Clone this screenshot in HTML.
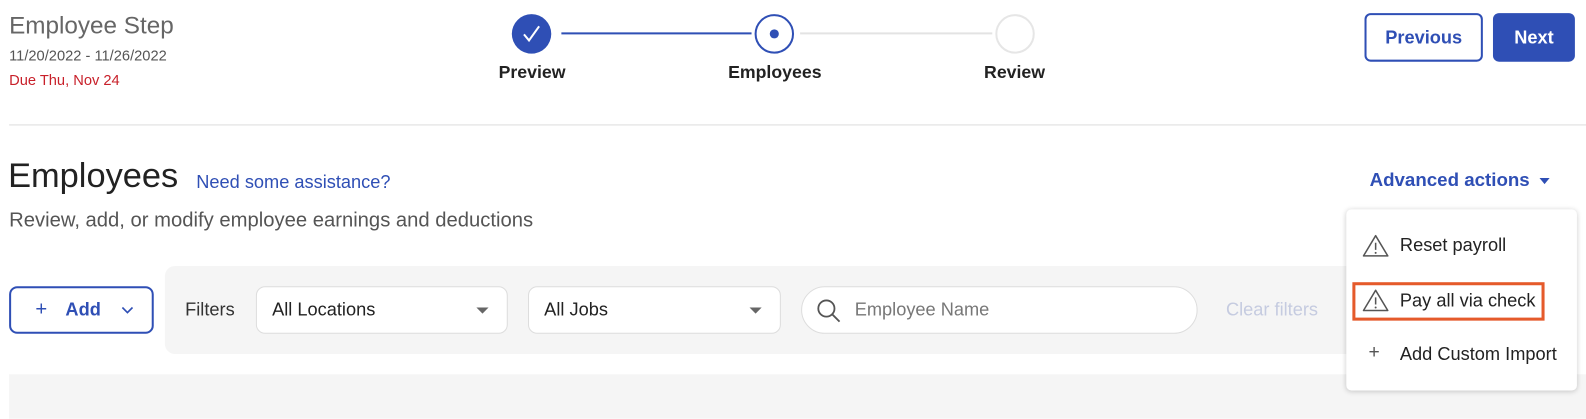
<!DOCTYPE html>
<html><head><meta charset="utf-8"><style>
*{box-sizing:border-box;margin:0;padding:0}
body{width:1586px;height:414px;overflow:hidden;background:#fff;font-family:"Liberation Sans",sans-serif;position:relative;color:#222}
#w{position:absolute;left:0;top:0;width:1568px;height:410px;transform:scale(1.0115);transform-origin:0 0}
.a{position:absolute}
.btn{position:absolute;border-radius:6px;font-weight:bold;font-size:18px;display:flex;align-items:center;justify-content:center}
.sel{position:absolute;top:283px;height:47px;background:#fff;border:1px solid #ddd;border-radius:9px;font-size:18px;padding-left:15px;display:flex;align-items:center;color:#222}
.tri{position:absolute;right:18px;top:20px;border-left:6px solid transparent;border-right:6px solid transparent;border-top:6px solid #666}
.lbl{position:absolute;top:61px;font-size:17.5px;font-weight:bold;color:#222;transform:translateX(-50%)}
.mi{position:absolute;font-size:18px;color:#222}
</style></head><body><div id="w">
<div class="a" style="left:9px;top:12px;font-size:24px;color:#666">Employee Step</div>
<div class="a" style="left:9px;top:48px;font-size:14.5px;color:#555">11/20/2022 - 11/26/2022</div>
<div class="a" style="left:9px;top:72px;font-size:14.5px;color:#c8202a">Due Thu, Nov 24</div>

<div class="a" style="left:555px;top:32px;width:188px;height:2px;background:#2f4fb5"></div>
<div class="a" style="left:791px;top:32px;width:190px;height:2px;background:#e3e3e3"></div>
<div class="a" style="left:506px;top:14px;width:39px;height:39px;border-radius:50%;background:#2f4fb5"></div>
<svg class="a" style="left:506px;top:14px" width="39" height="39"><path d="M12 20 L17 26 L27 12" stroke="#fff" stroke-width="2" fill="none"/></svg>
<div class="a" style="left:746px;top:14px;width:39px;height:39px;border-radius:50%;border:2px solid #2f4fb5"></div>
<div class="a" style="left:761px;top:29px;width:9px;height:9px;border-radius:50%;background:#2f4fb5"></div>
<div class="a" style="left:984px;top:14px;width:39px;height:39px;border-radius:50%;border:2px solid #e6e6e6"></div>
<div class="lbl" style="left:526px">Preview</div>
<div class="lbl" style="left:766px">Employees</div>
<div class="lbl" style="left:1003px">Review</div>

<div class="btn" style="left:1349px;top:13px;width:117px;height:48px;border:2px solid #2f4fb5;color:#2f4fb5">Previous</div>
<div class="btn" style="left:1476px;top:13px;width:81px;height:48px;background:#2f4fb5;color:#fff">Next</div>

<div class="a" style="left:9px;top:123px;width:1566px;height:1px;background:#ddd"></div>

<div class="a" style="left:8px;top:155px;font-size:34px;color:#222">Employees</div>
<div class="a" style="left:194px;top:170px;font-size:18px;color:#2f4fb5">Need some assistance?</div>
<div class="a" style="left:9px;top:207px;font-size:20px;color:#555">Review, add, or modify employee earnings and deductions</div>
<div class="a" style="left:1354px;top:167px;font-size:18.5px;font-weight:bold;color:#2f4fb5">Advanced actions</div>
<div class="a" style="left:1522px;top:176px;border-left:5px solid transparent;border-right:5px solid transparent;border-top:6px solid #2f4fb5"></div>

<div class="a" style="left:163px;top:263px;width:1200px;height:87px;background:#f5f5f5;border-radius:10px"></div>
<div class="btn" style="left:9px;top:283px;width:143px;height:47px;border:2px solid #2f4fb5;color:#2f4fb5;border-radius:8px;justify-content:flex-start;padding-left:24px"><span style="font-weight:normal;font-size:20px">+</span><span style="margin-left:18px">Add</span>
<svg style="margin-left:20px" width="12" height="8"><path d="M1 1 L6 6 L11 1" stroke="#2f4fb5" stroke-width="1.6" fill="none"/></svg></div>
<div class="a" style="left:183px;top:296px;font-size:18px;color:#333">Filters</div>
<div class="sel" style="left:253px;width:249px">All Locations<div class="tri"></div></div>
<div class="sel" style="left:522px;width:250px">All Jobs<div class="tri"></div></div>
<div class="sel" style="left:792px;width:392px;border-radius:24px;padding-left:52px;color:#777">Employee Name</div>
<svg class="a" style="left:806px;top:294px" width="26" height="26"><circle cx="11" cy="11" r="8" stroke="#555" stroke-width="1.8" fill="none"/><path d="M17 17 L24 24" stroke="#555" stroke-width="1.8"/></svg>
<div class="a" style="left:1212px;top:296px;font-size:18px;color:#c5cbe0">Clear filters</div>

<div class="a" style="left:9px;top:370px;width:1577px;height:44px;background:#f5f5f5"></div>

<div class="a" style="left:1331px;top:207px;width:228px;height:179px;background:#fff;border-radius:5px;box-shadow:0 1px 5px rgba(0,0,0,.2)"></div>
<div class="a" style="left:1337px;top:279px;width:190px;height:38px;border:3px solid #e55a2b"></div>
<svg class="a" style="left:1346px;top:230px" width="28" height="26"><path d="M14 3 L26 23 L2 23 Z" stroke="#555" stroke-width="1.5" fill="none" stroke-linejoin="round"/><path d="M14 10 V17" stroke="#555" stroke-width="1.5"/><circle cx="14" cy="20" r="1" fill="#555"/></svg>
<svg class="a" style="left:1346px;top:284px" width="28" height="26"><path d="M14 3 L26 23 L2 23 Z" stroke="#555" stroke-width="1.5" fill="none" stroke-linejoin="round"/><path d="M14 10 V17" stroke="#555" stroke-width="1.5"/><circle cx="14" cy="20" r="1" fill="#555"/></svg>
<div class="mi" style="left:1384px;top:232px">Reset payroll</div>
<div class="mi" style="left:1384px;top:287px">Pay all via check</div>
<div class="mi" style="left:1353px;top:338px;color:#555;font-size:19px">+</div>
<div class="mi" style="left:1384px;top:340px">Add Custom Import</div>
</div></body></html>
